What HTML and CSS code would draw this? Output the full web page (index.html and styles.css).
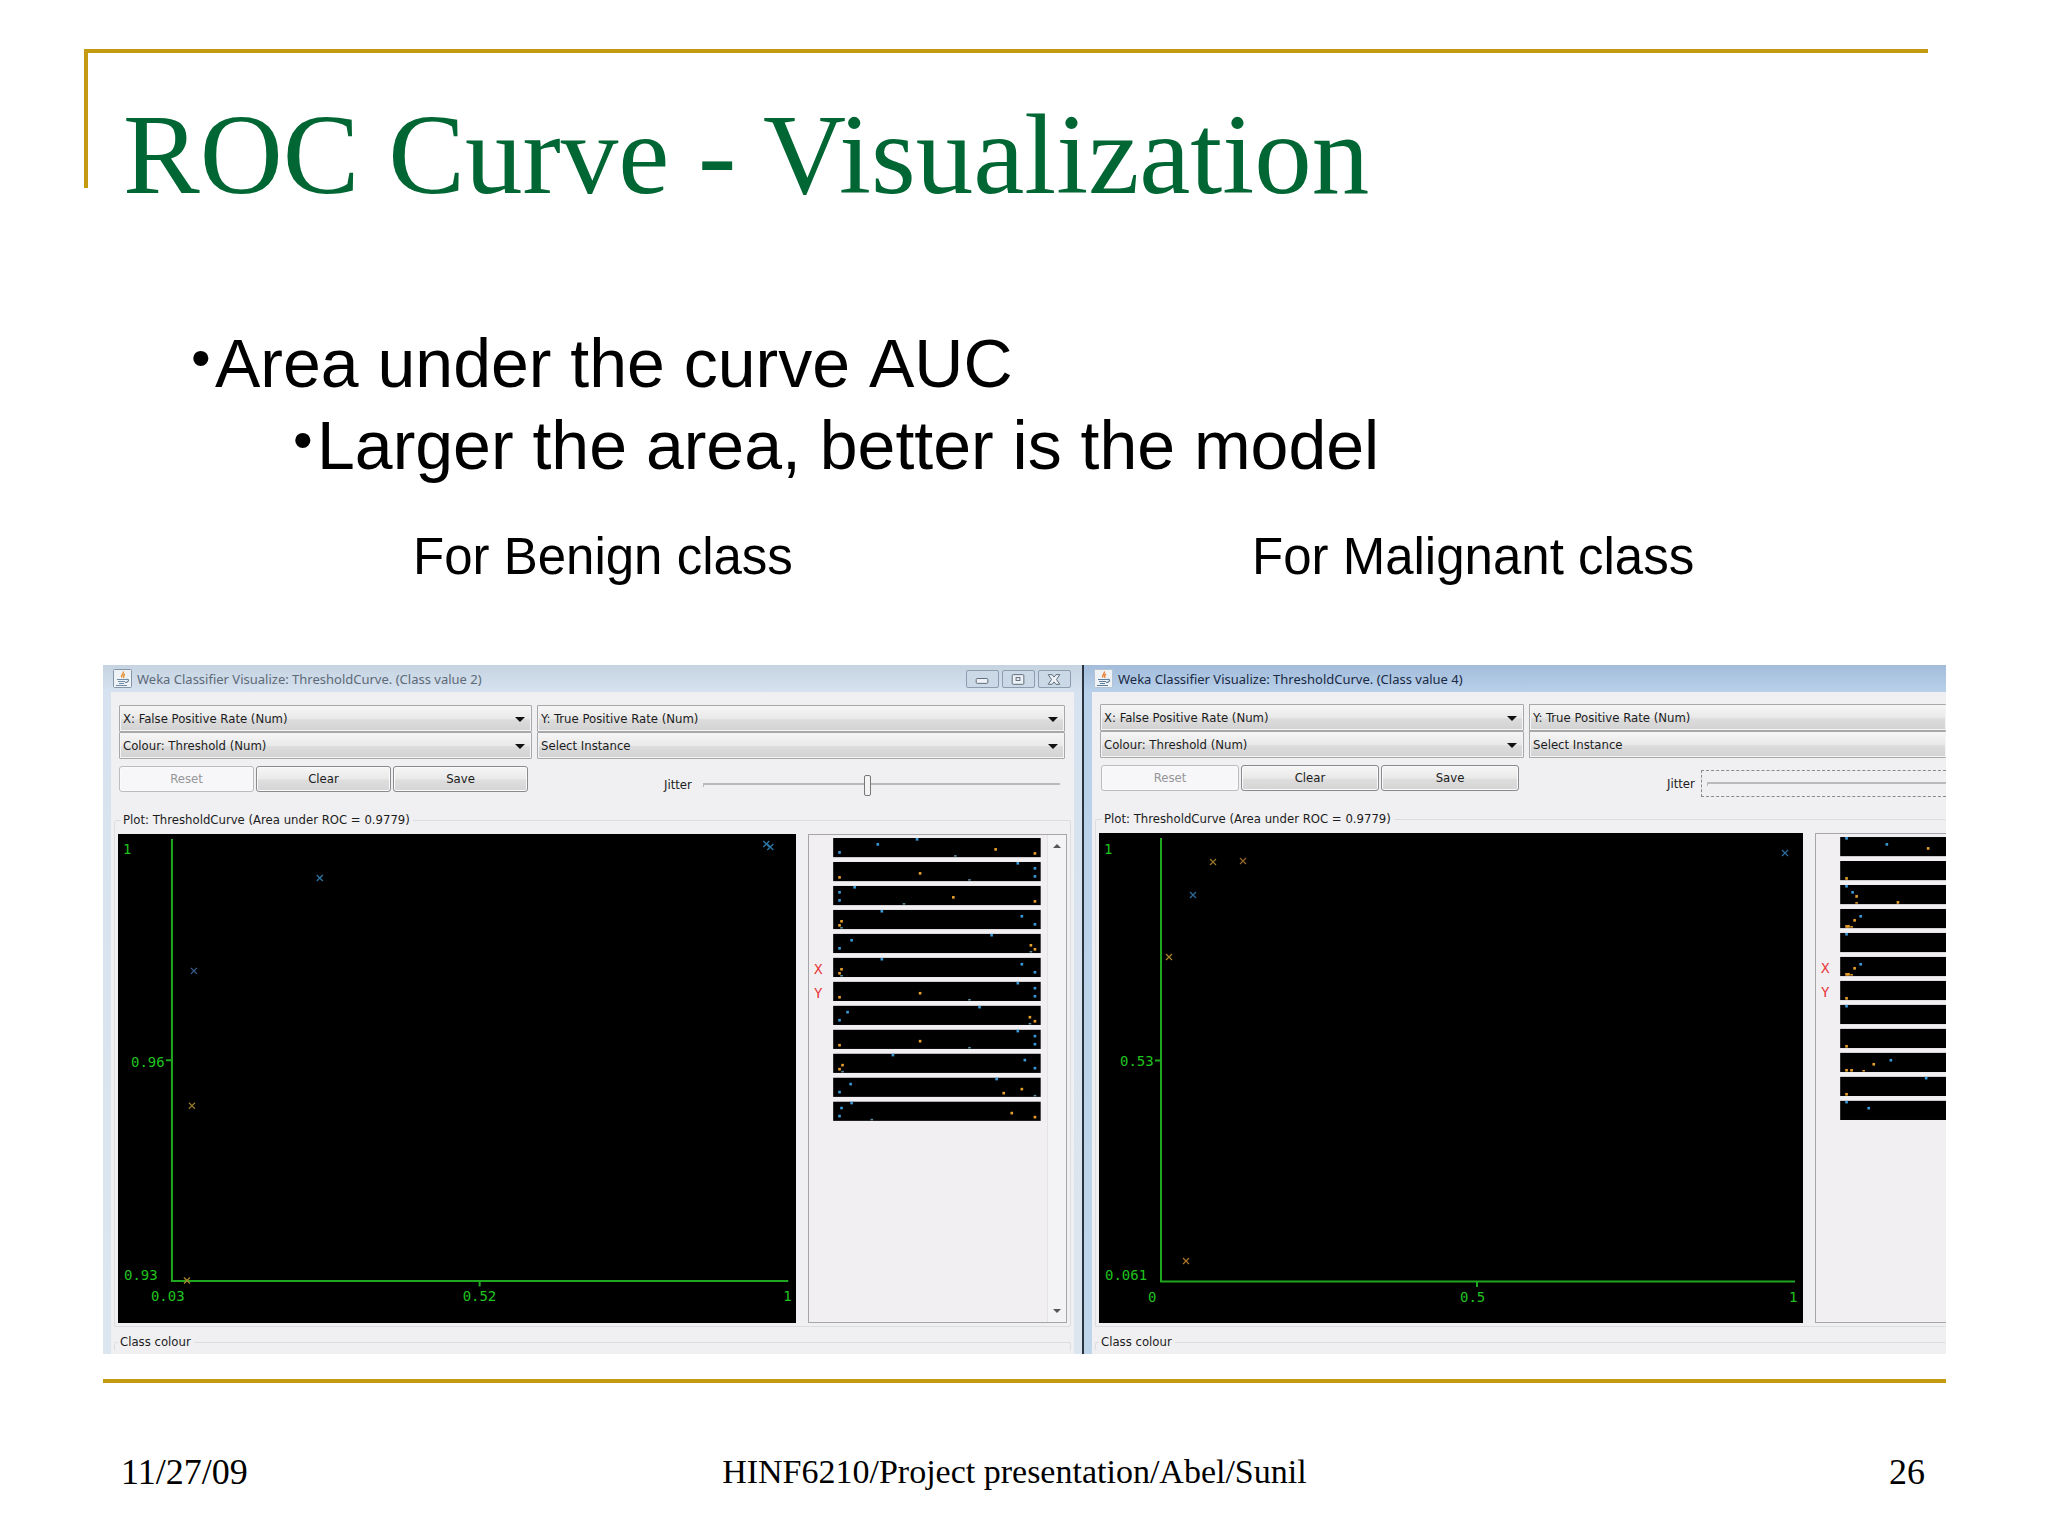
FILE: index.html
```html
<!DOCTYPE html>
<html lang="en">
<head>
    <meta charset="UTF-8">
    <meta name="viewport" content="width=device-width, initial-scale=1.0">
    <title>ROC Curve - Visualization</title>
    <link rel="stylesheet" href="styles.css">
</head>
<body>
    <header class="slide-header">
        <h1>ROC Curve - Visualization</h1>
    </header>

    <main>
        <ul class="points">
            <li>Area under the curve AUC
                <ul>
                    <li>Larger the area, better is the model</li>
                </ul>
            </li>
        </ul>

        <div class="class-names">
            <h2>For Benign class</h2>
            <h2>For Malignant class</h2>
        </div>

        <div class="windows">
            <section class="window benign">
                <div class="titlebar">
                    <svg class="java" viewBox="0 0 19 19" aria-hidden="true">
                        <rect x="0.5" y="0.5" width="18" height="18" rx="1" fill="#eef2f5" stroke="#8495a8"/>
                        <path d="M10 2.5c2 2-3 3-1 6M12 5c-2 1-2 2-1 4" fill="none" stroke="#e8943c" stroke-width="1.4"/>
                        <path d="M4 10.500h9M5 12.500h7M6 14.500h5M3 16.500h11M13 10.500c4-1 3 3-1 3" fill="none" stroke="#6d8caa" stroke-width="1.2"/>
                    </svg>
                    <span class="title">Weka Classifier Visualize: ThresholdCurve. (Class value 2)</span>
                    <div class="window-buttons">
                        <button aria-label="Minimize">
                            <svg viewBox="0 0 32 16"><rect x="9.500" y="7.500" width="12" height="5" rx="1"/></svg>
                        </button>
                        <button aria-label="Maximize">
                            <svg viewBox="0 0 32 16"><rect x="9.500" y="3.500" width="12" height="10" rx="1"/><rect x="13.500" y="6.500" width="4" height="3"/></svg>
                        </button>
                        <button aria-label="Close">
                            <svg viewBox="0 0 32 16"><path d="M9.500 3.500h4l2 2.500 2-2.500h4l-3.500 5 3.500 5h-4l-2-2.500-2 2.500h-4l3.500-5z"/></svg>
                        </button>
                    </div>
                </div>
                <div class="window-body">
                    <div class="selects">
                        <div class="select"><select aria-label="X axis"><option>X: False Positive Rate (Num)</option></select></div>
                        <div class="select"><select aria-label="Y axis"><option>Y: True Positive Rate (Num)</option></select></div>
                        <div class="select"><select aria-label="Colour"><option>Colour: Threshold (Num)</option></select></div>
                        <div class="select"><select aria-label="Instance"><option>Select Instance</option></select></div>
                    </div>
                    <div class="actions">
                        <button disabled>Reset</button>
                        <button>Clear</button>
                        <button>Save</button>
                        <div class="jitter">
                            <label for="jitter2">Jitter</label>
                            <div class="track"><input type="range" id="jitter2" min="0" max="100" value="46"></div>
                        </div>
                    </div>
                    <fieldset class="plot-group">
                        <legend>Plot: ThresholdCurve (Area under ROC = 0.9779)</legend>
                        <svg class="plot" id="plot2" viewBox="0 0 679 490"></svg>
                        <div class="attributes">
                            <svg class="strips" id="strips2" viewBox="0 0 236 300"></svg>
                            <div class="scrollbar"></div>
                        </div>
                    </fieldset>
                    <fieldset class="colour-group">
                        <legend>Class colour</legend>
                    </fieldset>
                </div>
            </section>

            <section class="window malignant">
                <div class="titlebar">
                    <svg class="java" viewBox="0 0 19 19" aria-hidden="true">
                        <rect x="0.5" y="0.5" width="18" height="18" rx="1" fill="#eef2f5" stroke="#b4c4d4"/>
                        <path d="M10 2.500c2 2-3 3-1 6M12 5c-2 1-2 2-1 4" fill="none" stroke="#e8843c" stroke-width="1.4"/>
                        <path d="M4 10.500h9M5 12.500h7M6 14.500h5M3 16.500h11M13 10.500c4-1 3 3-1 3" fill="none" stroke="#5d7f9f" stroke-width="1.2"/>
                    </svg>
                    <span class="title">Weka Classifier Visualize: ThresholdCurve. (Class value 4)</span>
                </div>
                <div class="window-body">
                    <div class="selects">
                        <div class="select"><select aria-label="X axis"><option>X: False Positive Rate (Num)</option></select></div>
                        <div class="select cut"><select aria-label="Y axis"><option>Y: True Positive Rate (Num)</option></select></div>
                        <div class="select"><select aria-label="Colour"><option>Colour: Threshold (Num)</option></select></div>
                        <div class="select cut"><select aria-label="Instance"><option>Select Instance</option></select></div>
                    </div>
                    <div class="actions">
                        <button disabled>Reset</button>
                        <button>Clear</button>
                        <button>Save</button>
                        <div class="jitter">
                            <label for="jitter4">Jitter</label>
                            <div class="track focused"><input type="range" id="jitter4" min="0" max="100" value="50"></div>
                        </div>
                    </div>
                    <fieldset class="plot-group">
                        <legend>Plot: ThresholdCurve (Area under ROC = 0.9779)</legend>
                        <svg class="plot" id="plot4" viewBox="0 0 704 490"></svg>
                        <div class="attributes">
                            <svg class="strips" id="strips4" viewBox="0 0 129 300"></svg>
                        </div>
                    </fieldset>
                    <fieldset class="colour-group">
                        <legend>Class colour</legend>
                    </fieldset>
                </div>
            </section>
        </div>
    </main>

    <footer class="slide-footer">
        <span>11/27/09</span>
        <span class="project">HINF6210/Project presentation/Abel/Sunil</span>
        <span class="page">26</span>
    </footer>

    <script>
        const BLUE = '#3b9bd8';
        const ORANGE = '#e8a02c';

        function drawPlot(id, plot) {
            let out = `<path class="axis" d="${plot.axis}"/>`;
            plot.labels.forEach(([x, y, text]) => {
                out += `<text class="tick" x="${x}" y="${y}">${text}</text>`;
            });
            plot.points.forEach(([x, y, color]) => {
                out += `<path d="M${x - 3} ${y - 3}l6 6m0 -6l-6 6" stroke="${color}" stroke-width="1.3" fill="none"/>`;
            });
            document.getElementById(id).innerHTML = out;
        }

        // rows: one list of [x, y, color] dots for each attribute
        function drawStrips(id, rows, width) {
            const left = 24;
            const top = 3;
            const pitch = 23.8;
            let out = '';
            rows.forEach((dots, i) => {
                const y = top + i * pitch;
                out += `<rect x="${left}" y="${y}" width="${width}" height="19"/>`;
                dots.forEach(([dx, dy, color]) => {
                    const h = dy > 17 ? 1.5 : 2.6;
                    out += `<rect x="${left + dx - 1}" y="${y + dy - 1}" width="2.6" height="${h}" fill="${color}"/>`;
                });
            });
            out += '<text class="axis-mark" x="5" y="138">X</text>';
            out += '<text class="axis-mark" x="5" y="162">Y</text>';
            document.getElementById(id).innerHTML = out;
        }

        drawPlot('plot2', {
            axis: 'M54 5V447.500H671M48 226.500H54M362 447V453',
            labels: [
                [5, 20, '1'], [13, 233, '0.96'], [6, 446, '0.93'],
                [33, 468, '0.03'], [345, 468, '0.52'], [666, 468, '1']
            ],
            points: [
                [202, 44, '#2c76a8'], [76, 137, '#3c5f90'], [74, 272, '#94752a'],
                [69, 447, '#a8842a'], [649, 10, '#2c76a8'], [653, 13, '#2c76a8']
            ]
        });

        drawPlot('plot4', {
            axis: 'M62 5V448.500H696M56 227.500H62M378 448V454',
            labels: [
                [5, 21, '1'], [21, 233, '0.53'], [6, 447, '0.061'],
                [49, 469, '0'], [361, 469, '0.5'], [690, 469, '1']
            ],
            points: [
                [686, 20, '#2c6a9c'], [94, 62, '#2c6a9c'], [114, 29, '#94752a'],
                [144, 28, '#94652a'], [70, 124, '#a8842a'], [87, 428, '#a8742a']
            ]
        });

        // all benign attributes share the same heights, only x differs
        const heights = [1, 6, 14, 11, 15, 18];
        const colors = [BLUE, BLUE, BLUE, ORANGE, ORANGE, '#5f8f9f'];
        const benign = [
            [83, 44, 6, 161, 200, 121],
            [183, 200, 200, 86, 6, 135],
            [21, 6, 6, 119, 200, 70],
            [48, 187, 200, 8, 6, 8],
            [157, 18, 6, 196, 200, 196],
            [48, 187, 200, 8, 6, 8],
            [183, 200, 200, 86, 6, 135],
            [145, 14, 6, 195, 200, 195],
            [183, 200, 200, 86, 6, 135],
            [59, 190, 200, 9, 6, 9],
            [162, 17, 6, 187, 169, 200],
            [18, 8, 6, 177, 200, 38]
        ];
        drawStrips('strips2', benign.map(xs => xs.map((x, i) => [x, heights[i], colors[i]])), 206);

        const rates = [[20, 7, BLUE], [14, 11, ORANGE], [6, 17, ORANGE], [8, 17, ORANGE], [11, 18, ORANGE]];
        drawStrips('strips4', [
            [[6, 1, BLUE], [46, 7, BLUE], [87, 11, ORANGE]],
            [[6, 17, ORANGE]],
            [[6, 1, BLUE], [12, 7, BLUE], [16, 11, ORANGE], [16, 18, ORANGE], [57, 17, ORANGE]],
            rates,
            [[6, 1, BLUE]],
            rates,
            [[6, 17, ORANGE]],
            [[6, 1, BLUE]],
            [[6, 17, ORANGE]],
            [[50, 7, BLUE], [33, 11, ORANGE], [6, 17, ORANGE], [11, 17, ORANGE], [23, 18, ORANGE]],
            [[85, 1, BLUE], [6, 17, ORANGE]],
            [[6, 1, BLUE], [28, 7, BLUE]]
        ], 105);
    </script>
</body>
</html>
```

FILE: styles.css
```css
* {
    box-sizing: border-box;
}
body {
    margin: 0;
    padding-top: 49px;
    background-color: #fff;
    color: #000;
    font-family: "Liberation Sans", Arial, sans-serif;
}
.slide-header {
    height: 139px;
    margin: 0 120px 0 84px;
    padding: 37px 0 0 35px;
    border-top: 4px solid #c49a10;
    border-left: 4px solid #c49a10;
}
h1 {
    margin: 0;
    color: #006633;
    font-family: "Liberation Serif", serif;
    font-size: 115px;
    font-weight: normal;
    line-height: 130px;
    white-space: nowrap;
}
.points,
.points ul {
    margin: 0;
    padding: 0;
    list-style: none;
}
.points {
    margin-top: 134px;
    padding-left: 191px;
    font-size: 68px;
    font-kerning: none;
    line-height: 82px;
}
.points ul {
    padding-left: 102px;
}
.points li::before {
    content: "•";
    display: inline-block;
    width: 24px;
    font-size: 56px;
    line-height: 50px;
    vertical-align: 10px;
}
.class-names {
    display: grid;
    grid-template-columns: 839px 1fr;
    margin-top: 41px;
    padding-left: 413px;
}
h2 {
    margin: 0;
    font-size: 51px;
    font-weight: normal;
    line-height: 60px;
}

/* Weka windows */
.windows {
    display: grid;
    grid-template-columns: 979fr 864fr;
    margin: 78px 102px 0 103px;
    padding-bottom: 25px;
    border-bottom: 4px solid #c49a10;
    font-family: "DejaVu Sans Condensed", "DejaVu Sans", sans-serif;
    font-size: 13px;
    color: #1c1c1c;
}
.window {
    min-width: 0;
    overflow: hidden;
}
.benign {
    padding: 0 8px;
    background: linear-gradient(#c6d3e0, #d6e2ef 27px, #dce6f0);
}
.malignant {
    padding-left: 8px;
    border-left: 2px solid #2a3440;
    background: linear-gradient(#a2bcda, #b9d0ea 27px, #bfd5ea);
}
.titlebar {
    display: flex;
    align-items: center;
    height: 27px;
    padding-left: 2px;
    font-family: "Noto Sans", sans-serif;
    color: #5d6a78;
}
.malignant .titlebar {
    color: #1a2a44;
}
.java {
    width: 19px;
    height: 19px;
    margin-right: 5px;
}
.title {
    white-space: nowrap;
}
.window-buttons {
    display: flex;
    gap: 3px;
    margin-left: auto;
    padding-right: 3px;
}
.window-buttons button {
    width: 33px;
    height: 18px;
    padding: 0;
    border: 1px solid #8d9cae;
    border-radius: 2px;
    background: #cbd8e5;
}
.window-buttons svg {
    display: block;
    width: 100%;
    height: 16px;
    fill: #eef2f6;
    stroke: #5c6a7a;
}
.window-body {
    padding: 13px 3px 3px;
    background-color: #f0f0f2;
}
.malignant .window-body {
    padding-top: 12px;
    padding-right: 0;
}
.selects {
    display: grid;
    grid-template-columns: 413fr 528fr;
    column-gap: 5px;
    margin: 0 6px 0 5px;
}
.malignant .selects {
    grid-template-columns: 423fr 416fr;
    margin-right: 0;
}
.select {
    position: relative;
}
.select::after {
    content: "";
    position: absolute;
    top: 12px;
    right: 7px;
    border: 5px solid transparent;
    border-top-color: #111;
    border-bottom: 0;
}
.select.cut::after {
    display: none;
}
select {
    display: block;
    width: 100%;
    height: 27px;
    padding: 0 3px 1px;
    appearance: none;
    border: 1px solid #a8a8aa;
    border-radius: 1px;
    background: linear-gradient(#f6f6f6, #e9e9e9 50%, #dcdcdc 55%, #d2d2d2);
    box-shadow: inset 0 0 0 1px #f4f4f4;
    color: inherit;
    font: inherit;
}
.cut select {
    border-right: 0;
}
.actions {
    display: flex;
    gap: 2px;
    height: 45px;
    margin-top: 7px;
    padding: 0 6px 0 5px;
}
.malignant .actions {
    padding-right: 0;
    padding-left: 6px;
}
.actions button {
    flex: none;
    width: 135px;
    height: 26px;
    padding: 0 0 1px;
    border: 1px solid #8a8a8e;
    border-radius: 3px;
    background: linear-gradient(#f6f6f6, #e9e9e9 50%, #dedede 55%, #d4d4d4);
    box-shadow: inset 0 0 0 1px #fafafa;
    color: inherit;
    font: inherit;
}
.malignant .actions button {
    width: 138px;
}
.actions button:disabled {
    border-color: #bcbcc0;
    background: #f7f7f9;
    color: #96969a;
}
.jitter {
    display: flex;
    flex: 1;
    align-items: center;
    gap: 6px;
    min-width: 0;
    height: 27px;
    margin: 5px 0 0 134px;
}
.malignant .jitter {
    margin-left: 146px;
}
.track {
    display: flex;
    flex: 1;
    align-items: center;
    min-width: 0;
    height: 27px;
    padding: 0 5px;
    overflow: hidden;
}
.track.focused {
    border: 1px dashed #8a8a8e;
    border-right: 0;
}
input[type="range"] {
    width: 100%;
    height: 21px;
    margin: 0;
    appearance: none;
    background: none;
}
/* the slider runs on past the visible edge */
.focused input[type="range"] {
    flex: none;
    width: 560px;
}
input[type="range"]::-webkit-slider-runnable-track {
    height: 4px;
    border-top: 2px solid #bababc;
    border-left: 1px solid #bababc;
}
input[type="range"]::-webkit-slider-thumb {
    width: 7px;
    height: 21px;
    margin-top: -10px;
    appearance: none;
    border: 1px solid #77777a;
    border-radius: 2px;
    background: #f4f4f4;
}
fieldset {
    min-width: 0;
    margin: 0;
    padding: 5px 3px 3px;
    border: 1px solid #dcdde0;
    border-radius: 2px;
}
.malignant fieldset {
    padding-right: 0;
    border-right: 0;
}
legend {
    margin-left: 3px;
    padding: 0 3px 0 2px;
    line-height: 18px;
}
.plot-group {
    display: flex;
}
.plot {
    display: block;
    flex: 679;
    min-width: 0;
    margin-right: 12px;
    background-color: #000;
}
.malignant .plot {
    flex: 704;
}
.axis {
    fill: none;
    stroke: #1fa81f;
    stroke-width: 2;
}
.tick {
    fill: #1fc41f;
    font-family: "DejaVu Sans Mono", monospace;
    font-size: 14px;
}
.attributes {
    display: flex;
    flex: 257;
    min-width: 0;
    border: 1px solid #a6a6aa;
    background-color: #f1eff2;
}
.malignant .attributes {
    flex: 130;
    border-right: 0;
}
.strips {
    display: block;
    flex: 1;
    align-self: flex-start;
    min-width: 0;
}
.axis-mark {
    fill: #e8383c;
    font-family: "DejaVu Sans Mono", monospace;
    font-size: 14px;
}
.scrollbar {
    display: flex;
    flex-direction: column;
    justify-content: space-between;
    align-items: center;
    width: 19px;
    padding: 9px 0;
    border-left: 1px solid #e4e4e8;
    background-color: #f3f2f5;
}
.scrollbar::before,
.scrollbar::after {
    content: "";
    border: 4px solid transparent;
}
.scrollbar::before {
    border-top: 0;
    border-bottom-color: #55555a;
}
.scrollbar::after {
    border-bottom: 0;
    border-top-color: #55555a;
}
.colour-group {
    height: 18px;
    margin-top: 6px;
    padding: 0;
    border-bottom: 0;
}

.slide-footer {
    display: grid;
    grid-template-columns: 35fr auto 36fr;
    margin: 69px 123px 0 121px;
    font-family: "Liberation Serif", serif;
    font-size: 36px;
    line-height: 40px;
}
.project {
    font-size: 34px;
}
.page {
    text-align: right;
}
```
